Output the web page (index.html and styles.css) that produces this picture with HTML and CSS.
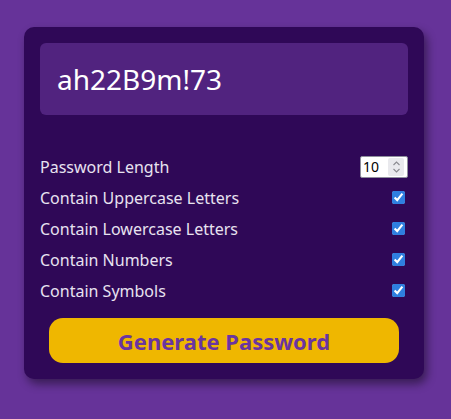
FILE: index.html
```html
<!DOCTYPE html>
<html>
<head>
<meta charset="utf-8">
<link rel="stylesheet" href="styles.css">
</head>
<body>
<div class="card">
  <div class="result">ah22B9m!73</div>
  <div class="settings">
    <div class="row"><label>Password Length</label>
      <div class="num">
        <input class="num-field" type="text" value="10">
        <span class="spin">
          <svg width="9" height="16" viewBox="0 0 9 16"><path d="M1.5 6 L4.5 3 L7.5 6 M1.5 10 L4.5 13 L7.5 10" fill="none" stroke="#8a8a90" stroke-width="1.1"/></svg>
        </span>
      </div>
    </div>
    <div class="row"><label>Contain Uppercase Letters</label><input type="checkbox" checked></div>
    <div class="row"><label>Contain Lowercase Letters</label><input type="checkbox" checked></div>
    <div class="row"><label>Contain Numbers</label><input type="checkbox" checked></div>
    <div class="row"><label>Contain Symbols</label><input type="checkbox" checked></div>
  </div>
  <button class="gen">Generate Password</button>
</div>
</body>
</html>
```
FILE: styles.css
```css
html, body { margin: 0; padding: 0; }
body {
  background: #663399;
  font-family: "Noto Sans", "Open Sans", sans-serif;
  width: 451px;
  height: 419px;
  overflow: hidden;
}
.card {
  box-sizing: border-box;
  margin: 27px 0 0 24px;
  width: 400px;
  height: 352px;
  background: #2f0857;
  border-radius: 10px;
  padding: 16px;
  box-shadow: 3px 5px 10px rgba(0,0,0,0.45);
  display: flex;
  flex-direction: column;
}
.result {
  height: 72px;
  background: #51237f;
  border-radius: 6px;
  color: #ffffff;
  font-size: 28px;
  line-height: 72px;
  padding-left: 17px;
}
.settings {
  margin-top: 36px;
  display: flex;
  flex-direction: column;
}
.row {
  height: 31px;
  display: flex;
  align-items: center;
  justify-content: space-between;
  color: #e8e2f0;
  font-size: 16px;
}
.row input[type=checkbox] {
  margin: 0 3px 0 0;
  width: 13px;
  height: 13px;
  accent-color: #2f7fe0;
}
.num {
  box-sizing: border-box;
  width: 48px;
  height: 22px;
  background: #ffffff;
  border: 1px solid #8f8f9d;
  border-radius: 2px;
  display: flex;
  align-items: center;
  padding: 1px 3px 1px 2px;
}
.num-field {
  width: 22px;
  border: none;
  outline: none;
  padding: 0;
  margin: 0;
  font-size: 14px;
  font-family: "Noto Sans", sans-serif;
  color: #000;
  background: transparent;
}
.spin {
  margin-left: auto;
  width: 16px;
  height: 18px;
  background: #e9e9ed;
  border-radius: 2px;
  display: flex;
  align-items: center;
  justify-content: center;
}
.gen {
  margin: 12px auto 0;
  width: 350px;
  height: 45px;
  border: none;
  border-radius: 14px;
  background: #efb700;
  color: #6a35a0;
  font-family: "Noto Sans", "Open Sans", sans-serif;
  font-weight: bold;
  font-size: 22px;
}
```
